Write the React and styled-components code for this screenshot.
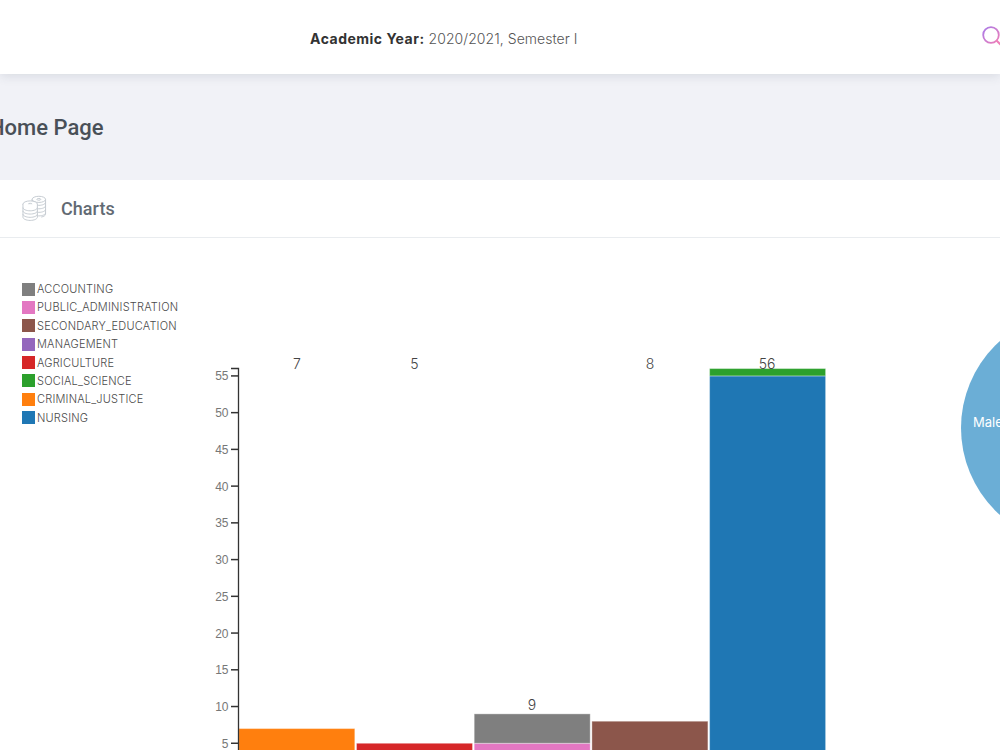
import React from 'react';
import styled, { createGlobalStyle } from 'styled-components';

const GlobalStyle = createGlobalStyle`
  html, body {
    margin: 0;
    padding: 0;
    height: 100%;
    overflow: hidden;
    background: #fff;
    font-family: "Inter", "Liberation Sans", sans-serif;
  }
`;

const Page = styled.div`
  width: 1000px;
  height: 750px;
  overflow: hidden;
  background: #f1f2f7;
`;

const TopBar = styled.header`
  position: relative;
  height: 74px;
  background: #fff;
  box-shadow: 0 2px 10px rgba(60, 70, 90, 0.14);
  display: flex;
  align-items: center;
  padding-left: 310px;
  box-sizing: border-box;
  overflow: hidden;
`;

const YearText = styled.div`
  font-size: 14px;
  color: #555;
  font-weight: 300;
  white-space: nowrap;
  margin-top: 2px;
  letter-spacing: 0.05px;

  b {
    color: #333;
    font-weight: 700;
    letter-spacing: 0.5px;
  }
`;

const SearchButton = styled.div`
  margin-left: auto;
  width: 18px;
  height: 24px;
  overflow: hidden;
  margin-top: 2px;
`;

const TitleBand = styled.div`
  height: 106px;
  display: flex;
  align-items: center;
`;

const PageTitle = styled.h1`
  margin: 0 0 0 -11px;
  font-family: "Roboto", sans-serif;
  font-size: 22px;
  font-weight: 500;
  color: #495057;
`;

const Card = styled.section`
  background: #fff;
  height: 570px;
  overflow: hidden;
`;

const CardHeader = styled.div`
  height: 58px;
  box-sizing: border-box;
  border-bottom: 1px solid #e9ecef;
  display: flex;
  align-items: center;
  gap: 14px;
  padding-left: 22px;
`;

const CardTitle = styled.h2`
  margin: 0 0 1px;
  font-family: "Roboto", sans-serif;
  font-size: 18px;
  font-weight: 500;
  letter-spacing: 0.05px;
  color: #626a73;
`;

const ChartRow = styled.div`
  display: flex;
  align-items: flex-start;
`;

const Legend = styled.ul`
  list-style: none;
  margin: 44.5px 0 0;
  padding: 0 0 0 22px;
  width: 178px;
  flex: none;
  display: flex;
  flex-direction: column;
  gap: 5.4px;
`;

const LegendItem = styled.li`
  display: flex;
  align-items: center;
  gap: 2px;
  height: 13px;
  font-size: 11px;
  font-weight: 300;
  letter-spacing: 0.2px;
  color: #4a4a4a;
  white-space: nowrap;
`;

const Swatch = styled.span`
  width: 13px;
  height: 13px;
  flex: none;
  background: ${props => props.color};
`;

const ChartSvg = styled.svg`
  display: block;
  flex: none;
  margin-top: 102px;
`;

const AxisLabel = styled.text`
  font-family: "Liberation Sans", sans-serif;
  font-size: 12px;
  fill: #777;
  text-anchor: end;
`;

const BarLabel = styled.text`
  font-size: 14px;
  font-weight: 300;
  fill: #444;
  text-anchor: middle;
`;

const SliceLabel = styled.text`
  font-size: 13px;
  fill: #fff;
`;

const legendItems = [
  { name: 'ACCOUNTING', color: '#7f7f7f' },
  { name: 'PUBLIC_ADMINISTRATION', color: '#e377c2' },
  { name: 'SECONDARY_EDUCATION', color: '#8c564b' },
  { name: 'MANAGEMENT', color: '#9467bd' },
  { name: 'AGRICULTURE', color: '#d62728' },
  { name: 'SOCIAL_SCIENCE', color: '#2ca02c' },
  { name: 'CRIMINAL_JUSTICE', color: '#ff7f0e' },
  { name: 'NURSING', color: '#1f77b4' },
];

// svg origin sits at page (200, 340)
const zeroY = 440;
const unit = 7.347;
const barWidth = 116;
const barStep = 117.7;
const firstBarX = 38.8;
const ticks = [55, 50, 45, 40, 35, 30, 25, 20, 15, 10, 5];

const stacks = [
  { segments: [{ from: 0, to: 7, color: '#ff7f0e' }] },
  { segments: [{ from: 0, to: 5, color: '#d62728' }] },
  {
    segments: [
      { from: 0, to: 5, color: '#e377c2' },
      { from: 5, to: 9, color: '#7f7f7f' },
    ],
  },
  { segments: [{ from: 0, to: 8, color: '#8c564b' }] },
  {
    segments: [
      { from: 0, to: 55, color: '#1f77b4' },
      { from: 55, to: 56, color: '#2ca02c' },
    ],
  },
];

const barLabels = [
  { x: 97, y: 29, text: '7' },
  { x: 214.5, y: 29, text: '5' },
  { x: 332, y: 370, text: '9' },
  { x: 450, y: 29, text: '8' },
  { x: 567, y: 29, text: '56' },
];

const scaleY = (value) => zeroY - value * unit;

const CoinsIcon = () => (
  <svg width="25" height="27" viewBox="0 0 26 28" fill="none" stroke="#c4cad0" strokeWidth="1">
    <ellipse cx="17.5" cy="4.5" rx="7" ry="3.2" />
    <ellipse cx="17.5" cy="4.5" rx="2" ry="0.9" />
    <path d="M10.5 4.5v15.5c0 1.4 2.5 2.6 5 3M24.5 4.5v15.5c0 1.3-2 2.4-4.5 2.9" />
    <path d="M15 10.4c1 .2 1.7.3 2.5.3 3.9 0 7-1.4 7-3.2" />
    <path d="M16 14.2c.5.1 1 .1 1.5.1 3.9 0 7-1.4 7-3.2" />
    <path d="M16 17.9c.5.1 1 .1 1.5.1 3.9 0 7-1.4 7-3.2" />
    <path d="M16 21.6c.5.1 1 .1 1.5.1 3.9 0 7-1.4 7-3.2" />
    <ellipse cx="8.5" cy="9.5" rx="7.5" ry="3.4" fill="#fff" />
    <ellipse cx="8.5" cy="9.5" rx="2" ry="0.9" />
    <path d="M1 9.5v13.5c0 1.9 3.4 3.4 7.5 3.4s7.5-1.5 7.5-3.4v-13.5" fill="#fff" />
    <path d="M1 13c0 1.9 3.4 3.4 7.5 3.4s7.5-1.5 7.5-3.4" />
    <path d="M1 16.4c0 1.9 3.4 3.4 7.5 3.4s7.5-1.5 7.5-3.4" />
    <path d="M1 19.8c0 1.9 3.4 3.4 7.5 3.4s7.5-1.5 7.5-3.4" />
  </svg>
);

const SearchIcon = () => (
  <svg width="24" height="24" viewBox="0 0 24 24" fill="none">
    <defs>
      <linearGradient id="searchGradient" x1="0" y1="0" x2="1" y2="1">
        <stop offset="0" stopColor="#a97ae8" />
        <stop offset="1" stopColor="#ee7fb8" />
      </linearGradient>
    </defs>
    <circle cx="9" cy="9" r="7.8" stroke="url(#searchGradient)" strokeWidth="1.8" />
    <path d="M15 15l5 5" stroke="#ee7fb8" strokeWidth="2" strokeLinecap="round" />
  </svg>
);

const BarChart = () => (
  <ChartSvg width="800" height="410" viewBox="0 0 800 410">
    {stacks.map((stack, i) =>
      stack.segments.map((seg) => (
        <rect
          key={seg.color}
          x={firstBarX + i * barStep}
          y={scaleY(seg.to)}
          width={barWidth}
          height={(seg.to - seg.from) * unit}
          fill={seg.color}
          stroke="#fff"
          strokeOpacity="0.35"
        />
      ))
    )}
    <path d="M31 28.5h7.5V410" fill="none" stroke="#333" strokeWidth="1.3" />
    {ticks.map((tick) => (
      <g key={tick}>
        <line x1="31" x2="38" y1={scaleY(tick)} y2={scaleY(tick)} stroke="#333" strokeWidth="1.5" />
        <AxisLabel x="28.5" y={scaleY(tick) + 4.5}>{tick}</AxisLabel>
      </g>
    ))}
    {barLabels.map((label) => (
      <BarLabel key={label.x} x={label.x} y={label.y}>{label.text}</BarLabel>
    ))}
    <circle cx="877.5" cy="88" r="116.5" fill="#6baed6" />
    <SliceLabel x="773" y="87">Male</SliceLabel>
  </ChartSvg>
);

export default function App() {
  return (
    <Page>
      <GlobalStyle />
      <TopBar>
        <YearText><b>Academic Year:</b> 2020/2021, Semester I</YearText>
        <SearchButton><SearchIcon /></SearchButton>
      </TopBar>
      <TitleBand>
        <PageTitle>Home Page</PageTitle>
      </TitleBand>
      <Card>
        <CardHeader>
          <CoinsIcon />
          <CardTitle>Charts</CardTitle>
        </CardHeader>
        <ChartRow>
          <Legend>
            {legendItems.map((item) => (
              <LegendItem key={item.name}>
                <Swatch color={item.color} />
                {item.name}
              </LegendItem>
            ))}
          </Legend>
          <BarChart />
        </ChartRow>
      </Card>
    </Page>
  );
}
